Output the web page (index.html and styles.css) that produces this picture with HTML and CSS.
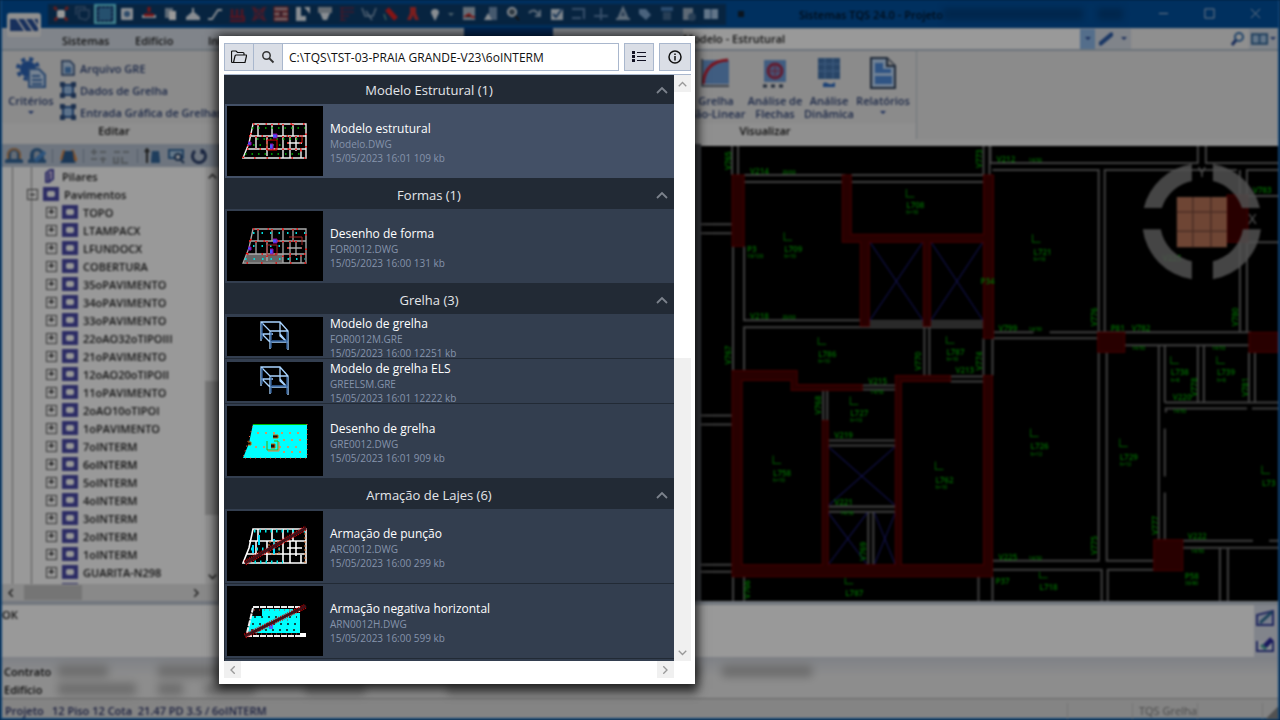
FILE: index.html
```html
<!DOCTYPE html>
<html lang="pt-BR">
<head>
    <meta charset="UTF-8">
    <meta name="viewport" content="width=device-width, initial-scale=1.0">
    <title>Sistemas TQS 24.0 - Projeto</title>
    <link rel="stylesheet" href="styles.css">
</head>
<body>

<!-- Shared drawings -->
<svg class="defs" aria-hidden="true">
    <symbol id="floor" viewBox="0 0 16 14">
        <rect width="16" height="14" fill="#4a4aa8"/>
        <rect x="4" y="4" width="8" height="6" rx="2" fill="#fff"/>
    </symbol>
    <symbol id="doc" viewBox="0 0 16 16">
        <path d="M2 1h8l4 4v10H2z" fill="#bcd4ee" stroke="#2c4a78" stroke-width="1.5"/>
        <path d="M5 7h6v6H5z" fill="#4f86c4"/>
    </symbol>
    <symbol id="net" viewBox="0 0 16 16">
        <path d="M3 3h10v10H3z" fill="#9cc0e8" stroke="#2c5c9c" stroke-width="2"/>
        <path d="M0 0h5v5H0zM11 0h5v5h-5zM0 11h5v5H0zM11 11h5v5h-5z" fill="#2f4f80"/>
    </symbol>
    <symbol id="bell" viewBox="0 0 18 16">
        <path d="M0 15h18v-3l-2-1V7a7 7 0 0 0-14 0v4l-2 1z" fill="#35689c"/>
        <path d="M6 11V6a3 3 0 0 1 6 0v5" fill="#a8b4c4"/>
    </symbol>
    <symbol id="plan" viewBox="0 0 96 70">
        <path d="M26 18H79V52H16L22 37ZM22 30H79M20 43H48M45 18V30M31 18V30M56 18V30M66 18V30M40 30V50M56 30V52M63 30V52M29 30V43M48 43H79M60 37H75M69 30V45M74 44V52" fill="none"/>
    </symbol>
    <symbol id="frame" viewBox="0 0 96 39">
        <g fill="none" stroke-width="1.3">
            <path d="M34 24V5H53L61 14V33M34 5L43 14V32M43 14H61M53 5V19L61 26M34 17H46M35 17L43 25H61M53 17L59 24" stroke="#a9d4ff"/>
            <path d="M35 6V22M44 15V31M60 15V32M45 24H60" stroke="#3465a4"/>
        </g>
    </symbol>
    <symbol id="up" viewBox="0 0 12 8">
        <path d="M1 7l5-5 5 5" fill="none" stroke="currentColor" stroke-width="1.8"/>
    </symbol>
</svg>

<div class="app">
    <header class="titlebar">
        <div class="logo">
            <svg width="28" height="12" viewBox="0 0 28 12"><path d="M0 0h6l8 12H0zM8 0h6l8 12h-6zM16 0h6l6 9v3h-4zM24 0h4v6z" fill="#27509a"/></svg>
        </div>
        <div class="quick">
            <button aria-label="Modelo"><svg viewBox="0 0 16 16"><path d="M1 1l14 14M15 1L1 15" stroke="#a33" stroke-width="3" stroke-dasharray="4 11"/><rect x="4" y="4" width="8" height="8" rx="2" fill="#fff"/></svg></button>
            <button aria-label="Copiar"><svg viewBox="0 0 16 16"><path d="M1 9V1h9v3M4 12V4h10v7l-3 3z" fill="none" stroke="#4c7098" stroke-width="1.5"/></svg></button>
            <button class="on" aria-label="Grelha"><svg viewBox="0 0 16 16"><rect x="1" y="1" width="14" height="14" fill="#3f86b8" stroke="#1a3f72" stroke-width="2" stroke-dasharray="3 1"/></svg></button>
            <button aria-label="Laje"><svg viewBox="0 0 16 16"><rect x="2" y="2" width="12" height="12" rx="1" fill="#e4ecf4"/><circle cx="8" cy="8" r="3" fill="#4a7cb0"/></svg></button>
            <button aria-label="Viga"><svg viewBox="0 0 16 16"><path d="M1 9h14v3H1z" fill="#e4ecf4"/><path d="M8 1v5M3 9h10" stroke="#c22" stroke-width="3"/></svg></button>
            <button aria-label="Colar"><svg viewBox="0 0 16 16"><path d="M2 2h8v10H2z" fill="#9cb0c4"/><path d="M6 5h7v9H6z" fill="#fff"/></svg></button>
            <button aria-label="Fundação"><svg viewBox="0 0 16 16"><path d="M7 2h2v4l6 5v3H1v-3l6-5z" fill="#e4ecf4"/></svg></button>
            <button aria-label="Escada"><svg viewBox="0 0 16 16"><path d="M1 13h4l6-9h4" fill="none" stroke="#e4ecf4" stroke-width="2"/></svg></button>
            <button aria-label="Blocos"><svg viewBox="0 0 16 16"><path d="M1 11h14v4H1M3 3v8M8 3v8M13 3v8" fill="none" stroke="#8c2438" stroke-width="2.5"/></svg></button>
            <button aria-label="Malha"><svg viewBox="0 0 16 16"><path d="M1 1l14 14M15 1L1 15M2 4h12M2 12h12M4 1v14M12 1v14" stroke="#7c2c44" stroke-width="1.5"/></svg></button>
            <button aria-label="Alvenaria"><svg viewBox="0 0 16 16"><path d="M1 1h14v4H1zM1 6h6v4H1zM9 6h6v4H9zM1 11h14v4H1z" fill="#b8a0a8" stroke="#922" stroke-width="1"/></svg></button>
            <button aria-label="Formas"><svg viewBox="0 0 16 16"><path d="M1 1h5v9h5v5H1zM9 1h6v7z" fill="#e4ecf4"/></svg></button>
            <button aria-label="Filtro"><svg viewBox="0 0 16 16"><path d="M1 1h14v6H1z" fill="#a8b4c0"/><path d="M3 7h10l-3 7H6z" fill="#e4ecf4"/></svg></button>
            <button aria-label="Estribos"><svg viewBox="0 0 16 16"><path d="M1 2h14M1 6h14M1 10h9M1 14h6M3 1v14" stroke="#6a2c48" stroke-width="1.5"/></svg></button>
            <button aria-label="Pórtico"><svg viewBox="0 0 16 16"><path d="M1 2l3 8h8l3-8M5 5l6 9" fill="none" stroke="#88a4c0" stroke-width="1.5"/></svg></button>
            <button aria-label="Lápis"><svg viewBox="0 0 16 16"><path d="M4 3l9 10" stroke="#d22" stroke-width="5"/><path d="M1 8l2 6" stroke="#8ca" stroke-width="1"/></svg></button>
            <button aria-label="Torre"><svg viewBox="0 0 16 16"><path d="M5 1h6v6l3 7h-4l-2-5-2 5H2l3-7z" fill="#c33"/></svg></button>
            <button aria-label="Local"><svg viewBox="0 0 16 16"><path d="M8 15L4 7a4 4 0 1 1 8 0z" fill="#e4ecf4"/></svg></button>
            <span class="caret"></span>
            <button aria-label="Imagem"><svg viewBox="0 0 16 16"><rect x="2" y="1" width="12" height="13" fill="#a8b8c8"/><path d="M3 11l5-3 3 3h3" stroke="#c33" stroke-width="2"/></svg></button>
            <button aria-label="Relatório"><svg viewBox="0 0 16 16"><path d="M6 1h8v13H6z" fill="#7494b8"/><path d="M1 14l4-7 4 7z" fill="#e4ecf4"/></svg></button>
            <button aria-label="Lupa"><svg viewBox="0 0 16 16"><circle cx="7" cy="6" r="4" fill="#4a5c6c" stroke="#e4ecf4" stroke-width="2"/><path d="M10 10l4 4" stroke="#222" stroke-width="2"/></svg></button>
            <button aria-label="Refazer"><svg viewBox="0 0 16 16"><path d="M2 7q5-6 10 2M13 4v6H8" fill="none" stroke="#9cb4cc" stroke-width="2"/></svg></button>
            <button aria-label="Marcar"><svg viewBox="0 0 16 16"><rect x="2" y="3" width="12" height="11" fill="#d4e0ec"/><path d="M4 8l3 3 6-8" fill="none" stroke="#25558c" stroke-width="2"/></svg></button>
            <button aria-label="Cotas"><svg viewBox="0 0 16 16"><path d="M1 3h12v10M1 12h9" fill="none" stroke="#5c84b0" stroke-width="2"/></svg></button>
            <button aria-label="Eixo"><svg viewBox="0 0 16 16"><path d="M8 2v12M1 10h14" stroke="#5c84b0" stroke-width="2"/></svg></button>
            <button aria-label="Texto"><svg viewBox="0 0 16 16"><path d="M1 13h14M4 11l4-9 4 9z" fill="#4a6a90" stroke="#9cb4cc" stroke-width="2"/></svg></button>
            <button aria-label="Etiqueta"><svg viewBox="0 0 16 16"><path d="M2 3h7l5 6-5 5-7-6z" fill="#7ca4d0"/></svg></button>
            <button aria-label="Pincel"><svg viewBox="0 0 16 16"><path d="M2 1h12v4H2z" fill="#4a80b8"/><path d="M4 6h8v8H4z" fill="#416890"/></svg></button>
            <button aria-label="Lista"><svg viewBox="0 0 16 16"><path d="M2 2h10v12H2z" fill="#9cb0c4"/><circle cx="11" cy="11" r="4" fill="#456a90"/></svg></button>
            <button aria-label="Ajuda"><svg viewBox="0 0 16 16"><path d="M1 3h6l1 1 1-1h6v10H1z" fill="#a4c4e4"/><path d="M8 4v9" stroke="#25558c" stroke-width="1"/></svg></button>
        </div>
        <span class="more"></span>
        <span class="app-title">Sistemas TQS 24.0 - Projeto</span>
        <span class="title-smudge"></span>
        <div class="window-buttons">
            <button aria-label="Minimizar"><svg viewBox="0 0 12 12"><path d="M1 6h10"/></svg></button>
            <button aria-label="Maximizar"><svg viewBox="0 0 12 12"><path d="M1 1h10v10H1z"/></svg></button>
            <button aria-label="Fechar"><svg viewBox="0 0 12 12"><path d="M1 1l10 10M11 1L1 11"/></svg></button>
        </div>
    </header>

    <nav class="tabs">
        <a href="#">Sistemas</a>
        <a href="#">Edifício</a>
        <a href="#">Interfaces</a>
        <span class="active-tab"></span>
        <input class="address" type="text" aria-label="Modelo" value="Modelo - Estrutural">
        <button class="drop" aria-label="Abrir lista"><span class="caret dark"></span></button>
        <button class="pencil" aria-label="Editar"><svg width="16" height="14" viewBox="0 0 16 14"><path d="M2 12L14 2" stroke="#2c5ca8" stroke-width="5" stroke-linecap="round"/></svg><span class="caret dark"></span></button>
        <div class="search">
            <input type="text" aria-label="Pesquisar">
            <svg width="14" height="14" viewBox="0 0 14 14"><circle cx="8" cy="5" r="4" fill="none" stroke="#3470b0" stroke-width="2"/><path d="M5 8l-4 5" stroke="#2c4c98" stroke-width="3"/></svg>
        </div>
        <button class="book" aria-label="Manual"><svg width="18" height="14" viewBox="0 0 18 14"><path d="M1 2h7l1 1 1-1h7v10H1z" fill="#a4c4e4" stroke="#34689c" stroke-width="2"/><path d="M9 3v9" stroke="#34689c" stroke-width="2"/></svg><span class="caret dark"></span></button>
    </nav>

    <div class="ribbon">
        <section class="group edit">
            <div class="group-body">
                <button class="big">
                    <svg width="32" height="32" viewBox="0 0 32 32"><circle cx="13" cy="12" r="8" fill="#2c64b8"/><circle cx="13" cy="12" r="10" fill="none" stroke="#2c64b8" stroke-width="4" stroke-dasharray="4 4"/><path d="M14 12h10l6 6v12H14z" fill="#c4daf4" stroke="#4474b4" stroke-width="2"/><path d="M17 19h8M17 23h10M17 27h10" stroke="#4474b4" stroke-width="2"/></svg>
                    <span>Critérios</span>
                    <span class="caret dark"></span>
                </button>
                <div class="small-buttons">
                    <button><svg><use href="#doc"/></svg>Arquivo GRE</button>
                    <button><svg><use href="#net"/></svg>Dados de Grelha</button>
                    <button><svg><use href="#net"/></svg>Entrada Gráfica de Grelhas</button>
                </div>
            </div>
            <h2>Editar</h2>
        </section>
        <section class="group view">
            <div class="group-body">
                <button class="big wide">
                    <svg width="32" height="32" viewBox="0 0 32 32"><path d="M3 3h26v24H3z" fill="#6c9cd8"/><path d="M3 27Q5 4 28 3" fill="none" stroke="#c23" stroke-width="3"/><path d="M2 2v27h27" fill="none" stroke="#34445c" stroke-width="1.5"/></svg>
                    <span>Grelha</span>
                    <span>Não-Linear</span>
                </button>
                <button class="big">
                    <svg width="32" height="32" viewBox="0 0 32 32"><path d="M5 3h22v22H5z" fill="#6c9cd8"/><circle cx="16" cy="14" r="7" fill="#7888c0" stroke="#a33050" stroke-width="3"/><path d="M11 14h10M16 9v10" stroke="#a33050"/><path d="M4 29h24" stroke="#34445c" stroke-width="3" stroke-dasharray="4 4"/></svg>
                    <span>Análise de</span>
                    <span>Flechas</span>
                </button>
                <button class="big">
                    <svg width="32" height="32" viewBox="0 0 32 32"><path d="M5 1h22v21H5z" fill="#4474ac"/><path d="M5 7h22M5 14h22M12 1v21M20 1v21" stroke="#6c9cd8"/><path d="M10 27c3-5 6 4 12-2v5H10z" fill="#2c6cc4"/></svg>
                    <span>Análise</span>
                    <span>Dinâmica</span>
                </button>
                <button class="big">
                    <svg width="32" height="32" viewBox="0 0 32 32"><path d="M4 1h16l8 8v22H4z" fill="#bcd8f8" stroke="#34445c" stroke-width="2"/><path d="M20 1v8h8" fill="#ccc" stroke="#34445c" stroke-width="2"/><path d="M8 6h8v6h8v4H8zM8 19h17v8H8z" fill="#4f8cdc"/></svg>
                    <span>Relatórios</span>
                    <span class="caret dark"></span>
                </button>
            </div>
            <h2>Visualizar</h2>
        </section>
    </div>

    <main class="workspace">
        <aside class="explorer">
            <div class="explorer-tools">
                <svg viewBox="0 0 18 16"><use href="#bell"/><path d="M3 11V7a6 6 0 0 1 12 0v4" fill="none" stroke="#c88850" stroke-width="2"/></svg>
                <svg viewBox="0 0 18 16"><use href="#bell"/><path d="M7 13L17 4" stroke="#4c8cd0" stroke-width="4"/></svg>
                <i></i>
                <svg viewBox="0 0 18 16"><path d="M13 2l4 11" stroke="#e08840" stroke-width="3"/><path d="M1 15h16l-2-3-1-9H5L3 12z" fill="#2c5c90"/><path d="M5 2L2 12" stroke="#e08840" stroke-width="2"/></svg>
                <i></i>
                <svg viewBox="0 0 18 16"><path d="M1 4h6M10 4h6M1 11h6M10 11h6M4 1v6M13 9v6" stroke="#8c949c" stroke-width="2"/></svg>
                <svg viewBox="0 0 18 16"><path d="M1 4h6M10 4h6M1 9v6h4V9M9 9v6h6" fill="none" stroke="#8c949c" stroke-width="2"/></svg>
                <i></i>
                <svg viewBox="0 0 18 16"><path d="M3 2v13M1 4l2-3 2 3" fill="none" stroke="#333" stroke-width="2"/><path d="M7 15V12l1-9h7l1 9v3z" fill="#35689c"/></svg>
                <svg viewBox="0 0 18 16"><path d="M2 2h14v8H2z" fill="#a8c8e4" stroke="#35689c" stroke-width="2"/><circle cx="11" cy="9" r="3" fill="#fff" stroke="#23426c" stroke-width="2"/><path d="M13 11l4 4" stroke="#23426c" stroke-width="2"/></svg>
                <svg viewBox="0 0 18 16"><path d="M13 3a6.500 6.500 0 1 1-8 0M12 1v5" fill="none" stroke="#2c406c" stroke-width="3"/></svg>
            </div>
            <div class="tree-area">
                <ul class="tree">
                    <li class="level-1 pillar"><svg viewBox="0 0 16 14"><path d="M5 4l4-3h3v9l-4 3H5zM8 4v9" fill="#dce" stroke="#4a4aa8" stroke-width="2"/></svg>Pilares</li>
                    <li class="level-1 open"><svg><use href="#floor"/></svg>Pavimentos</li>
                    <li><svg><use href="#floor"/></svg>TOPO</li>
                    <li><svg><use href="#floor"/></svg>LTAMPACX</li>
                    <li><svg><use href="#floor"/></svg>LFUNDOCX</li>
                    <li><svg><use href="#floor"/></svg>COBERTURA</li>
                    <li><svg><use href="#floor"/></svg>35oPAVIMENTO</li>
                    <li><svg><use href="#floor"/></svg>34oPAVIMENTO</li>
                    <li><svg><use href="#floor"/></svg>33oPAVIMENTO</li>
                    <li><svg><use href="#floor"/></svg>22oAO32oTIPOIII</li>
                    <li><svg><use href="#floor"/></svg>21oPAVIMENTO</li>
                    <li><svg><use href="#floor"/></svg>12oAO20oTIPOII</li>
                    <li><svg><use href="#floor"/></svg>11oPAVIMENTO</li>
                    <li><svg><use href="#floor"/></svg>2oAO10oTIPOI</li>
                    <li><svg><use href="#floor"/></svg>1oPAVIMENTO</li>
                    <li><svg><use href="#floor"/></svg>7oINTERM</li>
                    <li class="selected"><svg><use href="#floor"/></svg>6oINTERM</li>
                    <li><svg><use href="#floor"/></svg>5oINTERM</li>
                    <li><svg><use href="#floor"/></svg>4oINTERM</li>
                    <li><svg><use href="#floor"/></svg>3oINTERM</li>
                    <li><svg><use href="#floor"/></svg>2oINTERM</li>
                    <li><svg><use href="#floor"/></svg>1oINTERM</li>
                    <li><svg><use href="#floor"/></svg>GUARITA-N298</li>
                    <li><svg><use href="#floor"/></svg></li>
                </ul>
                <div class="tree-scroll">
                    <svg><use href="#up"/></svg>
                    <span></span>
                    <svg class="flip"><use href="#up"/></svg>
                </div>
            </div>
            <div class="tree-hscroll">
                <svg class="left"><use href="#up"/></svg>
                <span></span>
                <svg class="right"><use href="#up"/></svg>
            </div>
        </aside>
        <div class="files-dock"></div>
        <div class="canvas">
            <svg viewBox="701 146 576 455" preserveAspectRatio="xMinYMin slice">
                <!-- Beams -->
                <path class="beam" d="M732 146V175M738 146V175M983 146V175M989 146V175M744 175H845M851 175H983M744 182H842M851 182H983M701 224H732M701 233H732M733 240V370M744 246V320H862M744 370V327H983M869 321H923M930 321H983M869 324H983M924 327V375M929 327V375M983 338V375M992 338V375M701 415H732M701 424H732M701 564H732M701 571H732M733 576V600M744 576V600M978 576V600M992 576V600"/>
                <path class="beam" d="M862 385H895M862 389H895M823 390V420M827 390V420M950 376H983M950 381H983M828 440H895M828 445H895M828 506H895M828 511H895M868 512V564M873 512V564"/>
                <path class="beam" d="M990 146V163H1197V146M1205 146V163H1277M992 170H1098V332M1104 332V170H1236M1239 170V332M1246 332V170H1277M1247 196H1277M1247 242H1277M992 332H1033M1049 332H1250M992 338H1098M1124 345H1248M1098 352V560H992M1106 352V560H1153M1158 345V539M1164 345V402M1164 428V476M1164 492V539M1197 345V402M1203 345V402M1248 352V402M1254 352V402M1164 402H1277M1165 412V408H1246M1251 408H1277M1182 540H1252M1268 540H1277M1182 547H1277M992 569H1101V600M1153 569H1107V600M1219 547V600M1227 547V600"/>
                <!-- Voids -->
                <path class="void" d="M869 241L923 321M923 241L869 321M930 241L983 321M983 241L930 321M828 446L895 505M895 446L828 505M828 512L867 564M867 512L828 564M874 512L895 564M895 512L874 564"/>
                <!-- Walls and columns -->
                <path class="wall" d="M732 175H744V246H732ZM842 175H851V234H983V175H993V338H983V242H930V326H923V242H869V326H860V242H842Z"/>
                <path class="wall" fill-rule="evenodd" d="M732 370H797V384H862V390H791V380H742V564H822V420H828V564H895V375H950V381H901V564H983V375H992V576H732Z"/>
                <path class="wall" d="M1097 332H1124V352H1097ZM1248 332H1277V352H1248ZM1153 539H1182V570H1153ZM1226 195H1247V242H1226Z"/>
                <!-- Slab marks -->
                <path class="mark" d="M784 232v8h8M906 189v8h8M818 337v7h8M946 336v7h8M850 396v8h8M773 455v8h8M935 461v8h8M845 577v6h8M1032 234v8h8M1030 428v8h8M1119 438v8h8M1170 356v7h8M1216 356v7h8M1261 465v8h8M1039 571v6h8"/>
                <g class="tag">
                    <text x="784" y="252">L709</text><text x="906" y="208">L708</text><text x="818" y="357">L786</text><text x="946" y="355">L787</text>
                    <text x="850" y="416">L727</text><text x="773" y="475">L758</text><text x="935" y="482">L762</text><text x="845" y="595">L787</text>
                    <text x="1033" y="255">L721</text><text x="1030" y="448">L726</text><text x="1119" y="459">L729</text><text x="1170" y="375">L738</text>
                    <text x="1216" y="375">L739</text><text x="1261" y="485">L73</text><text x="1039" y="589">L718</text>
                    <text x="750" y="174">V214</text><text x="750" y="319">V218</text><text x="868" y="384">V215</text><text x="955" y="373">V213</text>
                    <text x="834" y="438">V219</text><text x="834" y="504">V221</text><text x="996" y="162">V212</text><text x="998" y="331">V799</text>
                    <text x="1110" y="331">P81</text><text x="1131" y="331">V782</text><text x="1252" y="193">V783</text><text x="1172" y="400">V220</text>
                    <text x="1187" y="538">V222</text><text x="1184" y="578">P58</text><text x="998" y="559">V225</text><text x="995" y="583">P37</text>
                    <text x="1162" y="261">V225</text><text x="980" y="284">P34</text><text x="747" y="252">P3</text>
                </g>
                <g class="tag fine">
                    <text x="782" y="174">20/60</text><text x="782" y="319">20/60</text><text x="784" y="258">h=10</text><text x="906" y="214">h=10</text><text x="747" y="258">19/120</text>
                    <text x="818" y="363">h=10</text><text x="946" y="361">h=10</text><text x="850" y="422">h=10</text><text x="773" y="481">h=10</text><text x="935" y="488">h=10</text>
                    <text x="1033" y="261">h=10</text><text x="1030" y="455">h=12</text><text x="1119" y="465">h=12</text><text x="1170" y="382">h=8</text><text x="1216" y="382">h=8</text>
                    <text x="1028" y="162">14/50</text><text x="1028" y="331">14/50</text><text x="1028" y="559">14/50</text><text x="1131" y="350">14/50</text><text x="1211" y="350">14/50</text>
                    <text x="1172" y="413">14/50</text><text x="1190" y="552">14/50</text><text x="1184" y="584">30/80</text><text x="840" y="514">14/50</text><text x="870" y="394">14/50</text>
                </g>
                <g class="tag">
                    <text transform="translate(731 170) rotate(-90)">V765</text><text transform="translate(731 364) rotate(-90)">V767</text><text transform="translate(921 370) rotate(-90)">V770</text>
                    <text transform="translate(982 370) rotate(-90)">V774</text><text transform="translate(982 168) rotate(-90)">V773</text><text transform="translate(821 414) rotate(-90)">V768</text>
                    <text transform="translate(866 560) rotate(-90)">V769</text><text transform="translate(1096 326) rotate(-90)">V776</text><text transform="translate(1237 326) rotate(-90)">V780</text>
                    <text transform="translate(1096 554) rotate(-90)">V775</text><text transform="translate(1157 534) rotate(-90)">V777</text><text transform="translate(1196 396) rotate(-90)">V778</text>
                    <text transform="translate(1247 396) rotate(-90)">V781</text><text transform="translate(750 598) rotate(-90)">V766</text>
                </g>
                <!-- View cube -->
                <g class="compass">
                    <path d="M1191 164A58 58 0 0 0 1143 208H1161A40 40 0 0 1 1191 181ZM1212 164A58 58 0 0 1 1259 208H1241A40 40 0 0 0 1212 181ZM1191 279A58 58 0 0 1 1142 229H1160A40 40 0 0 0 1191 261ZM1212 279A58 58 0 0 0 1260 229H1242A40 40 0 0 1 1212 261Z"/>
                    <text x="1197" y="177">Y</text>
                    <text x="1247" y="224">X</text>
                </g>
                <path d="M1176 197H1226V247H1176Z" fill="#b87458"/>
                <path d="M1192 197V247M1210 197V247M1176 212H1226M1176 231H1226" stroke="#7c4c3c" stroke-width="1.500"/>
            </svg>
        </div>
    </main>

    <section class="message">
        <output>OK</output>
        <div class="message-tools">
            <svg viewBox="0 0 18 16"><path d="M1 5v10h16V1z" fill="#c8d0e8" stroke="#34409c" stroke-width="2"/><path d="M4 13L16 2" stroke="#2c6c94" stroke-width="3"/></svg>
            <svg viewBox="0 0 18 16"><path d="M1 5v10h16V5" fill="#e4e8f0" stroke="#34409c" stroke-width="2"/><path d="M8 11l8-8" stroke="#2c2c9c" stroke-width="5"/><path d="M5 9l5 4" stroke="#4ca49c" stroke-width="3"/></svg>
        </div>
    </section>

    <section class="details">
        <div class="detail"><b>Contrato</b><i class="s50"></i><i class="s90"></i><i class="s400"></i><i class="s90"></i></div>
        <div class="detail"><b>Edifício</b><i class="s70"></i><i class="s25"></i><i class="s50"></i><i class="s60"></i><i class="s250"></i></div>
    </section>

    <footer class="status">
        <span class="project">Projeto</span>
        <span class="floor-info">12 Piso 12 Cota&nbsp; 21.47 PD 3.5 / 6oINTERM</span>
        <span class="cell"></span>
        <span class="cell">TQS Grelha</span>
        <span class="cell"></span>
        <span class="grip"></span>
    </footer>
</div>

<div class="shade"></div>

<div class="dialog" role="dialog" aria-label="Arquivos do pavimento">
    <div class="bar">
        <div class="path">
            <button aria-label="Abrir pasta"><svg width="16" height="14" viewBox="0 0 16 14"><path d="M3 12.500H1.500a1 1 0 0 1-1-1V2a1 1 0 0 1 1-1H5l1.500 1.500H12a1 1 0 0 1 1 1V5M2.500 12.500L4 6q.3-1 1.300-1H15q.8 0 .5 1L14 12.500z" fill="none" stroke="#111" stroke-width="1.200"/></svg></button>
            <button aria-label="Buscar"><svg width="14" height="14" viewBox="0 0 14 14"><circle cx="5.500" cy="5.500" r="3.700" fill="none" stroke="#333" stroke-width="1.500"/><path d="M8 8l4.500 4.500" stroke="#333" stroke-width="1.800"/></svg></button>
            <input type="text" aria-label="Pasta" value="C:\TQS\TST-03-PRAIA GRANDE-V23\6oINTERM">
        </div>
        <button aria-label="Lista"><svg width="16" height="12" viewBox="0 0 16 12"><path d="M1 0h3v3H1zM1 4h3v3H1zM1 8h3v3H1z" fill="#112"/><path d="M6 1.500h9M6 5.500h9M6 9.500h9" stroke="#112"/></svg></button>
        <button class="info" aria-label="Informações"><svg width="14" height="14" viewBox="0 0 14 14"><circle cx="7" cy="7" r="6" fill="none" stroke="#111" stroke-width="1.500"/><path d="M7 6v4.500M7 3.500v1.500" stroke="#111" stroke-width="1.500"/></svg></button>
    </div>

    <div class="files">
        <div class="file-list">
            <h2><button><span>Modelo Estrutural (1)</span><svg><use href="#up"/></svg></button></h2>
            <ul>
                <li class="current">
                    <svg class="thumb" viewBox="0 0 96 70">
                        <use href="#plan" stroke="#eee" stroke-width="1.4"/>
                        <use href="#plan" stroke="#e00" stroke-width="1.6" stroke-dasharray="1.5 11"/>
                        <path d="M18 48H55M25 22H78M30 33H76M26 39H54M58 48H76" stroke="#0b0" stroke-width="1.500" stroke-dasharray="1.500 5"/>
                        <path d="M46 28h4v4h-4M43 38h3v5h-3M21 36h3v3h-3" fill="#45f" stroke="#909"/>
                        <path d="M40 34v10h10V34zM75 29v8" fill="none" stroke="#d00"/>
                    </svg>
                    <div class="text"><strong>Modelo estrutural</strong><span>Modelo.DWG</span><span>15/05/2023 16:01 109 kb</span></div>
                </li>
            </ul>
            <h2><button><span>Formas (1)</span><svg><use href="#up"/></svg></button></h2>
            <ul>
                <li>
                    <svg class="thumb" viewBox="0 0 96 70">
                        <path d="M20 43h36v8H17z" fill="#666"/>
                        <use href="#plan" stroke="#aaa" stroke-width="1.300"/>
                        <use href="#plan" stroke="#e00" stroke-width="1.600" stroke-dasharray="1.5 13"/>
                        <path d="M18 48H78M26 22H78M26 35H54" stroke="#0dd" stroke-width="2" stroke-dasharray="1.500 7"/>
                        <path d="M46 28h4v4h-4M43 38h3v5h-3M21 36h3v3h-3" fill="#45f" stroke="#909"/>
                        <path d="M40 34v10h10V34zM62 26h13v8" fill="none" stroke="#a22"/>
                    </svg>
                    <div class="text"><strong>Desenho de forma</strong><span>FOR0012.DWG</span><span>15/05/2023 16:00 131 kb</span></div>
                </li>
            </ul>
            <h2><button><span>Grelha (3)</span><svg><use href="#up"/></svg></button></h2>
            <ul>
                <li class="short">
                    <svg class="thumb"><use href="#frame"/></svg>
                    <div class="text"><strong>Modelo de grelha</strong><span>FOR0012M.GRE</span><span>15/05/2023 16:00 12251 kb</span></div>
                </li>
                <li class="short">
                    <svg class="thumb"><use href="#frame"/></svg>
                    <div class="text"><strong>Modelo de grelha ELS</strong><span>GREELSM.GRE</span><span>15/05/2023 16:01 12222 kb</span></div>
                </li>
                <li>
                    <svg class="thumb" viewBox="0 0 96 70">
                        <path d="M26 18H80V52H16L22 37Z" fill="#0ff"/>
                        <path d="M26 18.500H80" stroke="#0b0"/>
                        <path d="M80 18V52H16L26 19" fill="none" stroke="#f64" stroke-dasharray="1 4"/>
                        <path d="M30 27H75M56 34H78M28 41H76M56 46H76" stroke="#c96" stroke-width="2" stroke-dasharray="2 6"/>
                        <path d="M46 29h5v3h-5M44 38h4v4h-4M21 36h3v3h-3" fill="#111" stroke="#c60"/>
                        <path d="M40 35v9h11v-9h-4" fill="none" stroke="#4a0"/>
                        <path d="M41 45h11V36" fill="none" stroke="#f73"/>
                    </svg>
                    <div class="text"><strong>Desenho de grelha</strong><span>GRE0012.DWG</span><span>15/05/2023 16:01 909 kb</span></div>
                </li>
            </ul>
            <h2><button><span>Armação de Lajes (6)</span><svg><use href="#up"/></svg></button></h2>
            <ul>
                <li>
                    <svg class="thumb" viewBox="0 0 96 70">
                        <use href="#plan" stroke="#fff" stroke-width="1.600"/>
                        <path d="M27 20H78M24 38H54M22 51H56" stroke="#0ee" stroke-width="3" stroke-dasharray="1.500 4"/>
                        <path d="M32 24v10M26 34v8M47 28v15" stroke="#0df" stroke-width="2"/>
                        <path d="M42 31h10v12H42zM78 18v34" fill="none" stroke="#d73" stroke-dasharray="2 2"/>
                        <path d="M18 52L79 17" stroke="#e00" stroke-width="5" stroke-dasharray="1 1"/>
                        <path d="M18 52L79 17" stroke="#401018" stroke-width="3"/>
                    </svg>
                    <div class="text"><strong>Armação de punção</strong><span>ARC0012.DWG</span><span>15/05/2023 16:00 299 kb</span></div>
                </li>
                <li>
                    <svg class="thumb" viewBox="0 0 96 70">
                        <path d="M35 23H66V27H73V47H20L24 30H35Z" fill="#0ff"/>
                        <path d="M26 21H72V26M19 50H79M20 47L26 22" fill="none" stroke="#eee" stroke-width="2" stroke-dasharray="6 1"/>
                        <path d="M73 47h6v4h-6z" fill="#fff"/>
                        <path d="M27 31H70M25 38H72M24 44H70" stroke="#111" stroke-width="1.500" stroke-dasharray="2 5"/>
                        <path d="M27 24H70M50 34H64M24 48H72" stroke="#c33" stroke-dasharray="1 4"/>
                        <path d="M42 38h4v5h-4z" fill="#46f"/>
                        <path d="M18 50L79 20" stroke="#e00" stroke-width="5" stroke-dasharray="1 1"/>
                        <path d="M18 50L79 20" stroke="#401018" stroke-width="3"/>
                    </svg>
                    <div class="text"><strong>Armação negativa horizontal</strong><span>ARN0012H.DWG</span><span>15/05/2023 16:00 599 kb</span></div>
                </li>
                <li>
                    <svg class="thumb"></svg>
                </li>
            </ul>
        </div>
        <div class="vscroll">
            <button aria-label="Subir"><svg><use href="#up"/></svg></button>
            <span></span>
            <button aria-label="Descer"><svg class="flip"><use href="#up"/></svg></button>
        </div>
        <div class="hscroll">
            <button aria-label="Esquerda"><svg class="left"><use href="#up"/></svg></button>
            <button aria-label="Direita"><svg class="right"><use href="#up"/></svg></button>
        </div>
    </div>
</div>

</body>
</html>
```
FILE: styles.css
```css
* {
    box-sizing: border-box;
}

body {
    margin: 0;
    background-color: #00305f;
    font-family: "Open Sans", "Noto Sans", sans-serif;
    font-size: 12px;
    overflow: hidden;
}

button, input {
    font: inherit;
    margin: 0;
    padding: 0;
    border: none;
    background: none;
}

h2, ul {
    margin: 0;
    padding: 0;
    list-style: none;
    font-size: inherit;
    font-weight: inherit;
}

.defs {
    position: absolute;
    width: 0;
    height: 0;
}

.caret {
    width: 0;
    border: 3px solid transparent;
    border-top: 3px solid #8ab;
    border-bottom: none;
}

.caret.dark {
    border-top-color: #2c4c98;
}

.flip {
    transform: rotate(180deg);
}

.left {
    transform: rotate(-90deg);
}

.right {
    transform: rotate(90deg);
}

/* Application behind the dialog */
.app {
    display: flex;
    flex-direction: column;
    height: 100vh;
    border: 2px solid #1c70c0;
    border-top: none;
    filter: blur(1px);
    background-color: #eee;
    font-size: 11px;
    font-weight: 600;
}

.shade {
    position: absolute;
    inset: 0;
    background-color: rgba(0, 0, 0, 0.4);
}

/* Title bar */
.titlebar {
    display: flex;
    align-items: center;
    height: 28px;
    background-color: #00509e;
}

.logo {
    display: flex;
    align-items: center;
    justify-content: center;
    align-self: flex-start;
    flex: none;
    width: 34px;
    height: 24px;
    margin: 13px 7px 0 5px;
    border-radius: 3px;
    background-color: #eee;
    z-index: 1;
}

.quick {
    display: flex;
    align-items: center;
    flex: none;
    height: 21px;
    width: 678px;
    padding-left: 2px;
    background-color: #0d3d6c;
}

.quick button {
    flex: none;
    width: 22px;
    height: 20px;
    padding: 2px 3px;
}

.quick button svg {
    display: block;
    width: 16px;
    height: 16px;
}

.quick .on {
    border: 2px solid #70e0f0;
    padding: 0 1px;
    background-color: #3f86b8;
}

.quick .caret {
    flex: none;
    margin: 0 4px 0 2px;
}

.more {
    width: 6px;
    height: 6px;
    margin: 0 55px 0 12px;
    background-color: #123;
}

.app-title {
    flex: none;
    white-space: nowrap;
    color: #001428;
}

.title-smudge {
    width: 180px;
    height: 12px;
    background: linear-gradient(90deg, #00407f 140px, #00509e 140px 155px, #00407f 155px);
    filter: blur(3px);
}

.window-buttons {
    display: flex;
    margin-left: auto;
}

.window-buttons button {
    width: 46px;
    height: 28px;
}

.window-buttons svg {
    width: 11px;
    height: 11px;
    fill: none;
    stroke: #ccd8e8;
}

/* Tab row */
.tabs {
    display: flex;
    align-items: center;
    height: 23px;
    padding-left: 60px;
    background-color: #d5dce6;
    border-bottom: 2px solid #b4c0cc;
}

.tabs a {
    width: 73px;
    padding-top: 4px;
    color: #222;
    text-decoration: none;
}

.tabs a + a + a {
    width: 68px;
}

.active-tab {
    flex: none;
    width: 89px;
    height: 21px;
    margin: 0 130px 0 188px;
    background-color: #053b80;
}

.address {
    flex: 1;
    min-width: 0;
    height: 20px;
    color: #222;
    background-color: #fff;
}

.drop {
    display: flex;
    align-items: center;
    justify-content: center;
    width: 15px;
    height: 20px;
    background-color: #8cb8e8;
}

.pencil, .book {
    display: flex;
    align-items: center;
    gap: 8px;
    padding: 0 4px;
}

.pencil {
    width: 36px;
}

.search {
    display: flex;
    align-items: center;
    width: 118px;
    height: 20px;
    background-color: #eee;
}

.search input {
    width: 100px;
    height: 18px;
}

.book {
    width: 29px;
    gap: 2px;
    padding: 0 2px;
}

/* Ribbon */
.ribbon {
    display: flex;
    flex: none;
    height: 88px;
    background-color: #e8e8e8;
}

.group {
    display: flex;
    flex-direction: column;
    flex: none;
    border-right: 1px solid #bcc4cc;
}

.group.edit {
    width: 225px;
    margin-right: 387px;
}

.group.view {
    width: 303px;
}

.group-body {
    display: flex;
    height: 72px;
    padding-top: 6px;
}

.view .group-body {
    justify-content: flex-end;
    padding-right: 6px;
}

.group h2 {
    height: 16px;
    line-height: 16px;
    text-align: center;
    color: #111;
    background-color: #eee;
}

.big {
    display: flex;
    flex-direction: column;
    align-items: center;
    width: 54px;
    white-space: nowrap;
    line-height: 13px;
    color: #2f4478;
}

.big svg {
    flex: none;
    margin-bottom: 5px;
}

.big .caret {
    margin-top: 4px;
}

.edit .big {
    width: 58px;
}

.big.wide {
    width: 64px;
}

.small-buttons button {
    display: flex;
    align-items: center;
    gap: 4px;
    height: 22px;
    white-space: nowrap;
    color: #2f4478;
}

.small-buttons svg {
    width: 16px;
    height: 16px;
}

/* Workspace */
.workspace {
    display: flex;
    flex: 1;
    min-height: 0;
    padding-top: 5px;
}

.explorer {
    display: flex;
    flex-direction: column;
    flex: none;
    width: 217px;
}

.explorer-tools {
    display: flex;
    align-items: center;
    gap: 5px;
    flex: none;
    height: 23px;
    padding-left: 3px;
    background-color: #b8c4d4;
}

.explorer-tools svg {
    flex: none;
    width: 18px;
    height: 16px;
}

.explorer-tools i {
    width: 1px;
    height: 14px;
    margin: 0 1px;
    background-color: #8898ac;
}

.tree-area {
    display: flex;
    flex: 1;
    min-height: 0;
    background-color: #fff;
    background-image: linear-gradient(#999, #999), linear-gradient(#999, #999);
    background-repeat: no-repeat;
    background-size: 1px 100%;
    background-position: 10px 0, 29px 0;
}

.tree {
    flex: 1;
    overflow: hidden;
}

.tree li {
    display: flex;
    align-items: center;
    gap: 5px;
    height: 18px;
    padding-left: 44px;
    color: #222;
}

.tree li::before {
    content: "+";
    width: 9px;
    height: 9px;
    border: 1px solid #555;
    line-height: 6px;
    text-align: center;
    font-weight: 700;
}

.tree .level-1 {
    padding-left: 25px;
}

.tree .open::before {
    content: "–";
}

.tree .pillar::before {
    content: "";
    border: none;
}

.tree svg {
    flex: none;
    width: 16px;
    height: 14px;
}

.tree .selected {
    color: #111;
}

.tree-scroll {
    display: flex;
    flex-direction: column;
    justify-content: space-between;
    align-items: center;
    width: 14px;
    padding: 6px 0 4px;
    color: #222;
    background-color: #f0f0f0;
}

.tree-scroll svg, .tree-hscroll svg {
    width: 9px;
    height: 6px;
}

.tree-scroll span {
    width: 14px;
    height: 134px;
    margin-top: 142px;
    background-color: #c8c8c8;
}

.tree-hscroll {
    display: flex;
    align-items: center;
    flex: none;
    height: 17px;
    padding: 0 18px 0 4px;
    color: #222;
    background-color: #e4e4e4;
}

.tree-hscroll span {
    width: 58px;
    height: 15px;
    margin: 0 auto 0 9px;
    background-color: #c4c4c4;
}

.files-dock {
    flex: none;
    width: 482px;
    background-color: #5c6068;
}

.canvas {
    flex: 1;
    min-width: 0;
    margin-top: 2px;
    background-color: #000;
    overflow: hidden;
}

.canvas svg {
    display: block;
    width: 100%;
    height: 100%;
}

.beam {
    fill: none;
    stroke: #6a6a6a;
    stroke-width: 2;
}

.wall {
    fill: #440000;
    stroke: #780000;
}

.void {
    fill: none;
    stroke: #20208c;
}

.mark {
    fill: none;
    stroke: #00a000;
}

.tag {
    font-size: 8px;
    fill: #00b800;
}

.fine {
    font-size: 5px;
}

.compass {
    fill: #888;
    fill-opacity: 0.85;
    font-size: 14px;
}

/* Message line */
.message {
    display: flex;
    flex: none;
    height: 56px;
    border-top: 4px solid #c0c8d4;
    background-color: #fff;
    color: #222;
}

.message output {
    flex: 1;
    padding-top: 2px;
}

.message-tools {
    display: flex;
    flex-direction: column;
    gap: 10px;
    width: 24px;
    padding: 5px 2px;
    background-color: #d8dce8;
}

.message-tools svg {
    width: 18px;
    height: 16px;
}

/* Project details */
.details {
    flex: none;
    height: 41px;
    padding: 5px 0 0 2px;
    background: linear-gradient(#d4d8e0, #ececec 20px);
}

.detail {
    display: flex;
    align-items: center;
    gap: 22px;
    height: 18px;
}

.detail b {
    width: 32px;
    font-weight: inherit;
    white-space: nowrap;
    color: #111;
}

.detail i {
    height: 12px;
    background-color: #b4b4b4;
    filter: blur(4px);
}

.s25 {
    width: 25px;
}

.s50 {
    width: 50px;
    margin-right: 28px;
}

.s60 {
    width: 60px;
}

.s70 {
    width: 78px;
}

.s90 {
    width: 90px;
}

.s250 {
    width: 250px;
    margin-left: 60px;
}

.s400 {
    width: 430px;
}

/* Status bar */
.status {
    display: flex;
    align-items: center;
    flex: none;
    height: 20px;
    padding: 4px 0 0 3px;
    border-top: 1px solid #aaa;
    background-color: #dcdcdc;
    color: #2c3468;
}

.project {
    width: 47px;
}

.floor-info {
    flex: 1;
}

.cell {
    width: 65px;
    height: 16px;
    padding-left: 6px;
    border-left: 1px solid #c4c4c4;
    line-height: 16px;
    font-weight: 400;
    color: #777;
    white-space: nowrap;
}

.grip {
    width: 16px;
    height: 16px;
    border-left: 1px solid #c4c4c4;
    background: linear-gradient(135deg, transparent 60%, #888 60%);
}

/* File dialog */
.dialog {
    position: absolute;
    top: 36px;
    bottom: 36px;
    left: 219px;
    width: 476px;
    display: flex;
    flex-direction: column;
    padding: 7px 4px 5px 5px;
    background-color: #fff;
    box-shadow: 0 2px 10px 3px rgba(0, 0, 0, 0.8);
}

.bar {
    display: flex;
    gap: 5px;
    flex: none;
    height: 32px;
    padding-bottom: 3px;
    border-bottom: 1px solid #a9b7cd;
}

.bar button {
    display: flex;
    align-items: center;
    justify-content: center;
    width: 30px;
    border: 1px solid #a9b7cd;
    background-color: #dadee6;
}

.bar .info {
    width: 32px;
}

.path {
    display: flex;
    flex: 1;
    border: 1px solid #a9b7cd;
}

.bar .path button {
    width: 29px;
    border-width: 0 1px 0 0;
}

.path input {
    flex: 1;
    min-width: 0;
    padding-left: 6px;
    color: #111;
}

.files {
    display: grid;
    grid-template-columns: 1fr 17px;
    grid-template-rows: 1fr 18px;
    flex: 1;
    min-height: 0;
}

.file-list {
    overflow: hidden;
    padding-left: 1px;
    background-color: #222a35;
}

.file-list h2:first-child {
    margin-top: -1px;
}

.file-list h2 button {
    display: flex;
    align-items: center;
    gap: 23px;
    width: 100%;
    height: 30px;
    padding: 2px 6px 0 0;
    font-size: 13px;
    font-weight: 500;
    color: #e4e6ea;
}

.file-list h2 span {
    flex: 1;
}

.file-list h2 svg {
    width: 12px;
    height: 8px;
    color: #7c828c;
}

.file-list li {
    display: flex;
    align-items: center;
    height: 75px;
    padding: 0 2px;
    background-color: #333e4f;
    border-bottom: 1px solid #222a35;
}

.file-list .current {
    background-color: #435066;
}

.file-list .short {
    height: 45px;
}

.thumb {
    flex: none;
    width: 96px;
    height: 70px;
    background-color: #000;
    fill: none;
}

.short .thumb {
    height: 39px;
}

.text {
    display: flex;
    flex-direction: column;
    padding: 3px 0 0 7px;
    font-size: 10px;
    line-height: 14px;
    color: #8593ab;
}

.text strong {
    font-size: 12px;
    font-weight: 500;
    line-height: 16px;
    color: #fff;
}

/* Scroll bars */
.vscroll {
    display: flex;
    flex-direction: column;
    background-color: #f0f0f0;
}

.vscroll button, .hscroll button {
    display: flex;
    align-items: center;
    justify-content: center;
    width: 17px;
    height: 17px;
    background-color: #f0f0f0;
    color: #999;
}

.vscroll svg, .hscroll svg {
    width: 9px;
    height: 6px;
}

.vscroll span {
    height: 266px;
    margin-bottom: auto;
    background-color: #fff;
}

.hscroll {
    display: flex;
    justify-content: space-between;
}
```
